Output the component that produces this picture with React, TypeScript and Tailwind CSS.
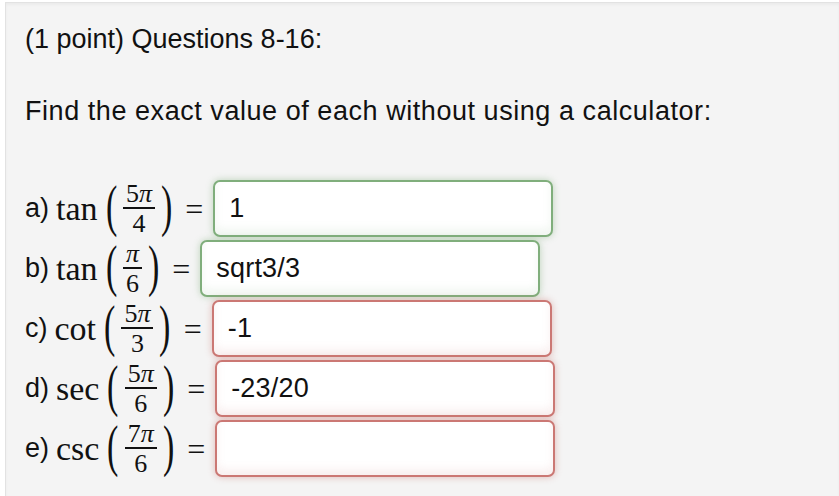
import React from "react";

type Row = {
  letter: string;
  fn: string;
  num: string;
  den: string;
  value: string;
  ok: boolean;
};

const ROWS: Row[] = [
  { letter: "a)", fn: "tan", num: "5", den: "4", value: "1", ok: true },
  { letter: "b)", fn: "tan", num: "", den: "6", value: "sqrt3/3", ok: true },
  { letter: "c)", fn: "cot", num: "5", den: "3", value: "-1", ok: false },
  { letter: "d)", fn: "sec", num: "5", den: "6", value: "-23/20", ok: false },
  { letter: "e)", fn: "csc", num: "7", den: "6", value: "", ok: false },
];

const SERIF = "font-['Times_New_Roman','Liberation_Serif',serif]";
const SANS = "font-['Liberation_Sans',Arial,sans-serif]";

function Paren({ side }: { side: "l" | "r" }) {
  return (
    <span
      className={`inline-block ${SERIF} text-[40px] leading-none scale-y-[1.45] scale-x-[0.85] text-[#111] -translate-y-[3px]`}
    >
      {side === "l" ? "(" : ")"}
    </span>
  );
}

function Frac({ num, den }: { num: string; den: string }) {
  return (
    <span className={`inline-flex flex-col items-center mx-[5px] ${SERIF} text-[26px] leading-[25px] text-[#111]`}>
      <span className="px-[3px] pb-[1px]">
        {num}
        <span className="italic">π</span>
      </span>
      <span className="self-stretch h-[2px] bg-[#111]" />
      <span className="pt-[2px]">{den}</span>
    </span>
  );
}

function AnswerRow({ row }: { row: Row }) {
  const box = row.ok
    ? "border-[#80ae7c] shadow-[0_0_7px_rgba(120,170,115,0.45),inset_0_-6px_8px_rgba(120,170,115,0.10)]"
    : "border-[#cb7874] shadow-[0_0_7px_rgba(200,110,105,0.45),inset_0_-6px_8px_rgba(200,110,105,0.10)]";
  return (
    <div className="flex items-center h-[57px]">
      <span className={`${SANS} text-[27px] text-[#111]`}>{row.letter}</span>
      <span className={`ml-[7px] ${SERIF} text-[34px] text-[#111]`}>{row.fn}</span>
      <span className="ml-[7px] flex items-center">
        <Paren side="l" />
        <Frac num={row.num} den={row.den} />
        <Paren side="r" />
      </span>
      <span className={`ml-[12px] ${SERIF} text-[32px] text-[#111]`}>=</span>
      <div
        className={`ml-[10px] w-[340px] h-[57px] rounded-[7px] border-2 bg-white flex items-center pl-[14px] ${SANS} text-[27px] tracking-[0.2px] text-[#111] ${box}`}
      >
        {row.value}
      </div>
    </div>
  );
}

export default function App() {
  return (
    <div className="w-[839px] h-[496px] bg-white overflow-hidden pl-[5px] pt-[2px]">
      <div className="h-full bg-[#f4f4f4] border-l border-t border-[#e2e2e2] shadow-[inset_0_2px_3px_rgba(0,0,0,0.04)] pl-[19px] pt-[21px]">
        <p className={`${SANS} text-[27px] leading-[30px] text-[#111]`}>(1 point) Questions 8-16:</p>
        <p className={`mt-[42px] ${SANS} text-[27px] tracking-[0.55px] leading-[30px] text-[#111]`}>
          Find the exact value of each without using a calculator:
        </p>
        <div className="mt-[54px] flex flex-col gap-[3px]">
          {ROWS.map((r) => (
            <AnswerRow key={r.letter} row={r} />
          ))}
        </div>
      </div>
    </div>
  );
}
